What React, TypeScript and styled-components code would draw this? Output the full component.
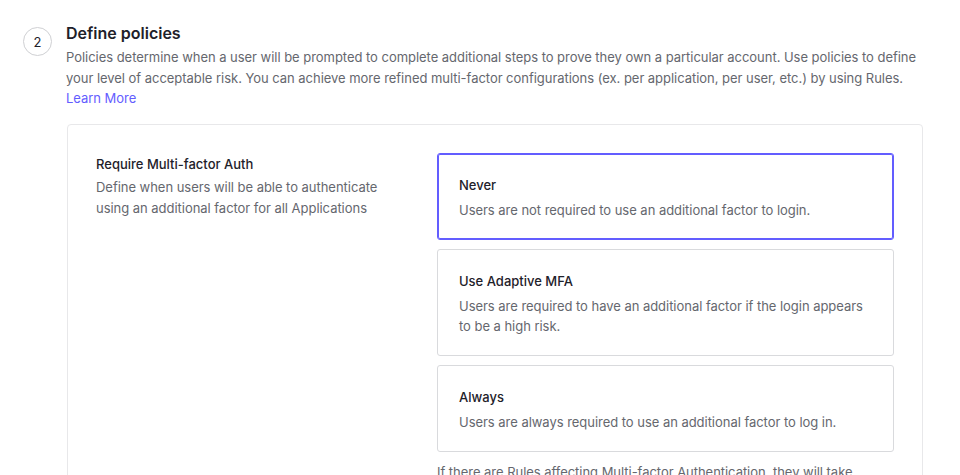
import styled, { createGlobalStyle } from 'styled-components';

const GlobalStyle = createGlobalStyle`
    body {
        margin: 0;
        background: #ffffff;
        font-family: Inter, "Noto Sans", sans-serif;
        color: #1e212a;
        -webkit-font-smoothing: antialiased;
    }
`;

const Page = styled.div`
    display: flex;
    align-items: flex-start;
    gap: 14px;
    padding: 22px 0 0 23px;
    width: 960px;
    height: 475px;
    box-sizing: border-box;
    overflow: hidden;
`;

const StepBadge = styled.div`
    flex: none;
    width: 29px;
    height: 29px;
    margin-top: 5px;
    border-radius: 50%;
    border: 1px solid #cfd0d3;
    box-sizing: border-box;
    display: flex;
    align-items: center;
    justify-content: center;
    font-size: 13px;
    color: #1e212a;
`;

const Section = styled.div`
    display: flex;
    flex-direction: column;
    width: 857px;
`;

const Heading = styled.h2`
    margin: 0;
    font-size: 16px;
    line-height: 22px;
    font-weight: 600;
    color: #1e212a;
`;

const Lead = styled.p`
    margin: 3px 0 0;
    font-size: 13px;
    line-height: 20.5px;
    letter-spacing: -0.035px;
    color: #65676e;
`;

const Link = styled.a`
    color: #635dff;
    text-decoration: none;
    cursor: pointer;
`;

const Card = styled.div`
    margin: 15px 0 0 1px;
    border: 1px solid #e8e8ea;
    border-radius: 4px;
    padding: 28px;
    display: grid;
    grid-template-columns: 1fr 457px;
    gap: 31px;
`;

const Intro = styled.div`
    display: flex;
    flex-direction: column;
    padding-top: 1px;
`;

const Label = styled.div`
    font-size: 13px;
    line-height: 20px;
    font-weight: 500;
    color: #1e212a;
`;

const Hint = styled.div`
    margin-top: 3px;
    font-size: 13px;
    line-height: 21px;
    letter-spacing: -0.035px;
    color: #65676e;
`;

const Options = styled.div`
    display: flex;
    flex-direction: column;
    gap: 9px;
`;

const Option = styled.div<{ $selected?: boolean }>`
    border: 1px solid ${p => (p.$selected ? '#635dff' : '#d9dadd')};
    box-shadow: ${p => (p.$selected ? 'inset 0 0 0 1px #635dff' : 'none')};
    border-radius: 3px;
    padding: 21px 21px 19px;
    display: flex;
    flex-direction: column;
    gap: 5px;
    cursor: pointer;
`;

const OptionTitle = styled.div`
    font-size: 13px;
    line-height: 20px;
    font-weight: 500;
    color: #1e212a;
`;

const OptionText = styled.div`
    font-size: 13px;
    line-height: 20px;
    letter-spacing: -0.035px;
    color: #65676e;
`;

const Note = styled.div`
    margin-top: 10px;
    font-size: 13px;
    line-height: 20px;
    letter-spacing: -0.035px;
    color: #65676e;
`;

const policies = [
    { title: 'Never', text: 'Users are not required to use an additional factor to login.', selected: true },
    { title: 'Use Adaptive MFA', text: 'Users are required to have an additional factor if the login appears to be a high risk.' },
    { title: 'Always', text: 'Users are always required to use an additional factor to log in.' },
];

export default function App() {
    return <>
        <GlobalStyle />
        <Page>
            <StepBadge>2</StepBadge>
            <Section>
                <Heading>Define policies</Heading>
                <Lead>
                    Policies determine when a user will be prompted to complete additional steps to prove they own a particular account. Use policies to define your level of acceptable risk. You can achieve more refined multi-factor configurations (ex. per application, per user, etc.) by using Rules.
                    <br />
                    <Link>Learn More</Link>
                </Lead>
                <Card>
                    <Intro>
                        <Label>Require Multi-factor Auth</Label>
                        <Hint>Define when users will be able to authenticate using an additional factor for all Applications</Hint>
                    </Intro>
                    <div>
                        <Options>
                            {policies.map(p => (
                                <Option key={p.title} $selected={p.selected}>
                                    <OptionTitle>{p.title}</OptionTitle>
                                    <OptionText>{p.text}</OptionText>
                                </Option>
                            ))}
                        </Options>
                        <Note>If there are Rules affecting Multi-factor Authentication, they will take precedence over the policy selected here.</Note>
                    </div>
                </Card>
            </Section>
        </Page>
    </>;
}
